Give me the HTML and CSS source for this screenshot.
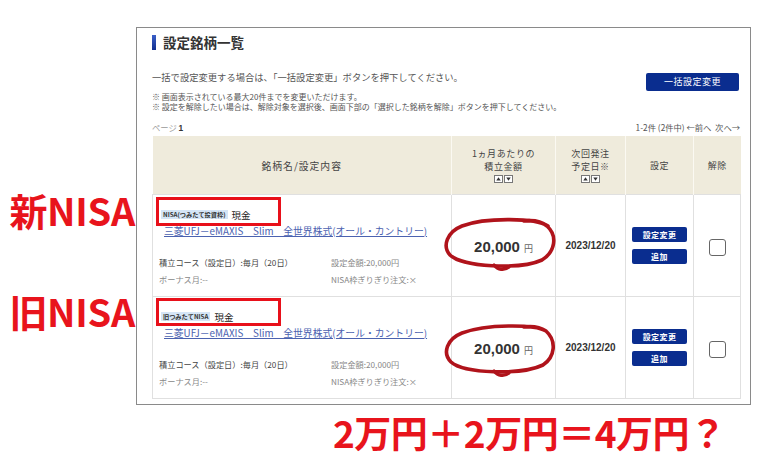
FILE: index.html
```html
<!DOCTYPE html>
<html lang="ja">
<head>
<meta charset="utf-8">
<title>設定銘柄一覧</title>
<link rel="stylesheet" href="styles.css">
</head>
<body>
<div class="page">
  <div class="stage">
    <div class="labels">
      <div class="label label-new">新NISA</div>
      <div class="label label-old">旧NISA</div>
    </div>
    <div class="panel">
      <h1 class="title"><span class="title-bar"></span>設定銘柄一覧</h1>
      <div class="intro">
        <p class="intro-text">一括で設定変更する場合は、「一括設定変更」ボタンを押下してください。</p>
        <button class="btn btn-bulk">一括設定変更</button>
      </div>
      <div class="notes">
        <p class="note">※ 画面表示されている最大20件までを変更いただけます。</p>
        <p class="note">※ 設定を解除したい場合は、解除対象を選択後、画面下部の「選択した銘柄を解除」ボタンを押下してください。</p>
      </div>
      <div class="pager"><span class="page-no">ページ <b>1</b></span><span class="page-nav">1-2件 (2件中) ←前へ&nbsp;&nbsp;次へ→</span></div>
      <table class="list">
        <colgroup>
          <col class="w-name"><col class="w-amount"><col class="w-date"><col class="w-set"><col class="w-del">
        </colgroup>
        <thead>
          <tr>
            <th>銘柄名/設定内容</th>
            <th>1ヵ月あたりの<br>積立金額
              <svg class="sort" width="19" height="8" viewBox="0 0 19 8"><rect x="0.5" y="0.5" width="8" height="7" fill="#fff" stroke="#777"/><path d="M2.3 5.6 L4.5 2.2 L6.7 5.6Z" fill="#333"/><rect x="10.5" y="0.5" width="8" height="7" fill="#fff" stroke="#777"/><path d="M12.3 2.4 L16.7 2.4 L14.5 5.8Z" fill="#333"/></svg>
            </th>
            <th>次回発注<br>予定日※
              <svg class="sort" width="19" height="8" viewBox="0 0 19 8"><rect x="0.5" y="0.5" width="8" height="7" fill="#fff" stroke="#777"/><path d="M2.3 5.6 L4.5 2.2 L6.7 5.6Z" fill="#333"/><rect x="10.5" y="0.5" width="8" height="7" fill="#fff" stroke="#777"/><path d="M12.3 2.4 L16.7 2.4 L14.5 5.8Z" fill="#333"/></svg>
            </th>
            <th>設定</th>
            <th>解除</th>
          </tr>
        </thead>
        <tbody>
          <tr>
            <td class="c-name">
              <div class="name-head"><span class="tag">NISA(つみたて投資枠)</span><span class="cash">現金</span></div>
              <a class="fund">三菱UFJ－eMAXIS　Slim　全世界株式(オール・カントリー)</a>
              <div class="details">
                <span class="d-main">積立コース（設定日）:毎月（20日）</span><span>設定金額:20,000円</span>
                <span>ボーナス月:--</span><span>NISA枠ぎりぎり注文:×</span>
              </div>
              <span class="mark-box"></span>
            </td>
            <td class="c-amount">
              <span class="amount">20,000</span><span class="yen">円</span>
              <svg class="mark-ring" width="118" height="56" viewBox="0 0 118 56"><path d="M106 9 C 94 1, 44 0, 20 9 C 5 15, 0 29, 8 38 C 20 50, 78 53, 100 43 C 113 35, 116 19, 105 9 C 99 4, 90 3, 82 4" fill="none" stroke="#b0131b" stroke-width="3.6" stroke-linecap="round"/><path d="M52 48 C 56 53, 62 54, 67 50" fill="none" stroke="#b0131b" stroke-width="3.2" stroke-linecap="round"/></svg>
            </td>
            <td class="c-date">2023/12/20</td>
            <td class="c-set"><div class="btns"><button class="btn btn-small">設定変更</button><button class="btn btn-small">追加</button></div></td>
            <td class="c-del"><span class="check"></span></td>
          </tr>
          <tr>
            <td class="c-name">
              <div class="name-head"><span class="tag">旧つみたてNISA</span><span class="cash">現金</span></div>
              <a class="fund">三菱UFJ－eMAXIS　Slim　全世界株式(オール・カントリー)</a>
              <div class="details">
                <span class="d-main">積立コース（設定日）:毎月（20日）</span><span>設定金額:20,000円</span>
                <span>ボーナス月:--</span><span>NISA枠ぎりぎり注文:×</span>
              </div>
              <span class="mark-box mark-box-2"></span>
            </td>
            <td class="c-amount">
              <span class="amount">20,000</span><span class="yen">円</span>
              <svg class="mark-ring mark-ring-2" width="118" height="56" viewBox="0 0 118 56"><path d="M104 8 C 92 1, 44 1, 20 10 C 5 16, 0 30, 9 39 C 22 51, 80 52, 101 42 C 113 34, 115 18, 104 8 C 98 4, 90 3, 82 4" fill="none" stroke="#b0131b" stroke-width="3.6" stroke-linecap="round"/><path d="M52 48 C 56 53, 62 54, 67 50" fill="none" stroke="#b0131b" stroke-width="3.2" stroke-linecap="round"/></svg>
            </td>
            <td class="c-date">2023/12/20</td>
            <td class="c-set"><div class="btns"><button class="btn btn-small">設定変更</button><button class="btn btn-small">追加</button></div></td>
            <td class="c-del"><span class="check"></span></td>
          </tr>
        </tbody>
      </table>
    </div>
  </div>
  <p class="caption">2万円＋2万円＝4万円？</p>
</div>
</body>
</html>
```

FILE: styles.css
```css
* { box-sizing: border-box; }
html, body { margin: 0; padding: 0; background: #fff; }
body {
  font-family: "Noto Sans CJK JP", "Noto Sans", sans-serif;
  color: #444;
}
.page {
  width: 768px;
  height: 459px;
  overflow: hidden;
  position: relative;
}
.stage {
  display: flex;
  align-items: flex-start;
}
.labels {
  width: 136px;
  flex: none;
  display: flex;
  flex-direction: column;
  align-items: flex-end;
  padding-top: 188px;
  padding-right: 1px;
}
.label {
  font-family: "Noto Sans CJK JP", sans-serif;
  font-weight: 700;
  font-size: 38px;
  line-height: 44px;
  color: #e8141c;
  letter-spacing: -0.3px;
}
.label-old { margin-top: 57px; }

.panel {
  margin-top: 27px;
  width: 615px;
  flex: none;
  border: 1px solid #8a8a8a;
  padding: 6px 10px 5px 15px;
}
.title {
  margin: 0;
  display: flex;
  align-items: center;
  font-size: 13.5px;
  line-height: 16px;
  font-weight: 700;
  color: #333;
  height: 16px;
}
.title-bar {
  width: 4px;
  height: 15px;
  background: linear-gradient(#3a5fc8, #132f8f);
  margin-right: 7px;
}
.intro {
  margin-top: 21px;
  display: flex;
  justify-content: space-between;
  align-items: flex-start;
  height: 20px;
}
.intro-text {
  margin: 0;
  font-size: 9.3px;
  line-height: 12px;
  color: #555;
}
.btn {
  font-family: "Noto Sans CJK JP", sans-serif;
  border: none;
  padding: 0;
  color: #fff;
  background: #0a2d8f;
  border-radius: 2px;
}
.btn-bulk {
  margin-top: 2px;
  margin-right: 1px;
  width: 93px;
  height: 18px;
  font-size: 9px;
  line-height: 18px;
  letter-spacing: 0.5px;
}
.notes {
  margin-top: 1px;
}
.note {
  margin: 0;
  height: 10px;
  font-size: 8px;
  line-height: 10px;
  color: #555;
  white-space: nowrap;
}
.pager {
  margin-top: 9px;
  display: flex;
  justify-content: space-between;
  font-size: 8.3px;
  line-height: 12px;
  color: #555;
}
.page-no { color: #999; }
.page-no b { color: #333; font-family: "Liberation Sans", sans-serif; }

.list {
  margin-top: 2px;
  width: 588px;
  border-collapse: collapse;
  table-layout: fixed;
}
.w-name { width: 299px; }
.w-amount { width: 104px; }
.w-date { width: 70px; }
.w-set { width: 68px; }
.w-del { width: 47px; }
.list th {
  height: 58px;
  background: #efebdc;
  border-left: 1px solid #fbf9f2;
  font-weight: 400;
  font-size: 9px;
  line-height: 12.5px;
  letter-spacing: 0.6px;
  color: #444;
  text-align: center;
  vertical-align: middle;
  padding: 2px 0 0;
}
.list th:first-child { border-left: none; font-size: 9.8px; letter-spacing: 1px; }
.sort { display: block; margin: 2px auto 0; }
.list td {
  height: 102px;
  border: 1px solid #e0e0e0;
  vertical-align: middle;
  position: relative;
  padding: 0;
}
.list td.c-name { vertical-align: top; padding: 13px 0 0 6px; }
.name-head {
  display: flex;
  align-items: center;
  height: 14px;
  margin-left: 2px;
}
.tag {
  background: #d5e5f6;
  color: #333;
  font-weight: 700;
  font-size: 6.2px;
  line-height: 9px;
  padding: 0 2px;
}
.cash {
  margin-left: 4px;
  font-size: 9.5px;
  color: #222;
}
.fund {
  display: block;
  margin: 2px 0 0 5px;
  font-size: 9.8px;
  line-height: 14px;
  color: #4b62b0;
  text-decoration: underline;
  white-space: nowrap;
}
.details {
  margin-top: 16px;
  display: grid;
  grid-template-columns: 172px auto;
  font-size: 8.2px;
  line-height: 17px;
  color: #888;
}
.details .d-main { color: #444; }
.mark-box {
  position: absolute;
  left: 3px;
  top: 2px;
  width: 125px;
  height: 29px;
  border: 3.5px solid #e8101a;
}
.mark-box-2 { top: 1px; height: 28px; }
.c-amount { text-align: center; }
.amount {
  font-family: "Liberation Sans", sans-serif;
  font-weight: 700;
  font-size: 15px;
  color: #333;
}
.yen {
  margin-left: 4px;
  font-size: 9px;
  color: #666;
}
.mark-ring {
  position: absolute;
  left: -10px;
  top: 22px;
}
.mark-ring-2 { top: 26px; }
.c-date {
  text-align: center;
  font-family: "Liberation Sans", sans-serif;
  font-weight: 700;
  font-size: 10px;
  color: #333;
}
.btns {
  display: flex;
  flex-direction: column;
  align-items: center;
  gap: 7px;
}
.btn-small {
  width: 55px;
  height: 15px;
  font-size: 8px;
  line-height: 15px;
  font-weight: 700;
  letter-spacing: 0.4px;
}
.c-del { text-align: center; }
.check {
  display: inline-block;
  width: 17px;
  height: 17px;
  border: 1.5px solid #666;
  border-radius: 3px;
  background: #fff;
  vertical-align: middle;
}
.caption {
  margin: 6px 0 0;
  padding-left: 333px;
  font-family: "Noto Sans CJK JP", sans-serif;
  font-weight: 700;
  font-size: 37px;
  line-height: 42px;
  color: #e8141c;
  letter-spacing: -0.5px;
  white-space: nowrap;
}
```
